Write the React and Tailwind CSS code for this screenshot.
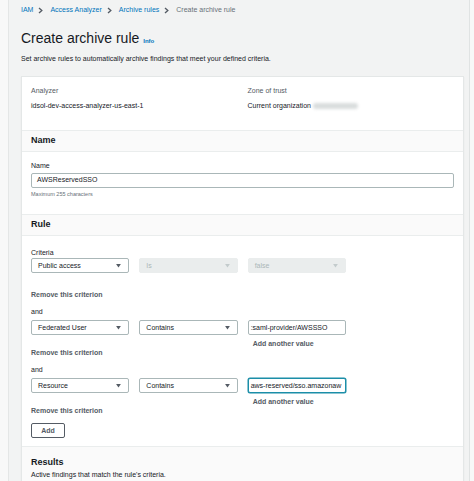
import React from 'react';

const FONT = { fontFamily: '"Liberation Sans", Arial, sans-serif' };

const Chevron = () => (
  <svg viewBox="0 0 6 8" className="w-[5px] h-[7px] ml-[5px] mr-[7px] shrink-0">
    <path d="M1.2 1 L4.6 4 L1.2 7" fill="none" stroke="#545b64" strokeWidth="1.6" />
  </svg>
);

const Caret = ({ light }) => (
  <svg viewBox="0 0 6 5" className="w-[5px] h-[4px] shrink-0">
    <path d="M0 0 H6 L3 4.5 Z" fill={light ? '#c3cbcc' : '#545b64'} />
  </svg>
);

const Select = ({ value, disabled }) => (
  <div
    className={`h-[15px] flex items-center justify-between pl-[6px] pr-[7px] rounded-[2px] border text-[7px] ${
      disabled ? 'bg-[#eaeded] border-[#eaeded] text-[#aab7b8]' : 'bg-white border-[#aab7b8] text-[#16191f]'
    }`}
  >
    <span className="leading-none">{value}</span>
    <Caret light={disabled} />
  </div>
);

const TextBox = ({ value, focused }) => (
  <div
    className={`h-[15px] flex items-center pl-[2px] rounded-[2px] overflow-hidden whitespace-nowrap bg-white text-[7px] text-[#16191f] ${
      focused ? 'border border-[#1b8ea8] shadow-[0_0_0_0.5px_#1b8ea8]' : 'border border-[#aab7b8]'
    }`}
  >
    <span className="leading-none">{value}</span>
  </div>
);

const LinkText = ({ children, className = '' }) => (
  <div className={`text-[7px] leading-[10px] font-bold text-[#545b64] ${className}`}>{children}</div>
);

const criteria = [
  { field: 'Public access', op: 'Is', value: 'false', disabled: true },
  { field: 'Federated User', op: 'Contains', value: ':saml-provider/AWSSSO' },
  { field: 'Resource', op: 'Contains', value: 'aws-reserved/sso.amazonaw', focused: true },
];

const App = () => {
  return (
    <div className="flex h-[481px] overflow-hidden bg-[#f2f3f3]" style={FONT}>
      <div className="w-[9px] shrink-0 bg-[#f8f8f8] border-r border-[#e4e6e6]" />

      <main className="flex-1 min-w-0 pl-[12px] pr-[5px]">
        {/* Breadcrumbs */}
        <nav className="mt-[5px] h-[10px] flex items-center text-[7px] leading-[10px]">
          <span className="text-[#0073bb]">IAM</span>
          <Chevron />
          <span className="text-[#0073bb]">Access Analyzer</span>
          <Chevron />
          <span className="text-[#0073bb]">Archive rules</span>
          <Chevron />
          <span className="text-[#687078]">Create archive rule</span>
        </nav>

        <div className="mt-[14px] flex items-baseline">
          <h1 className="text-[14px] leading-[18px] text-[#16191f]">Create archive rule</h1>
          <span className="ml-[4px] text-[6px] font-bold text-[#0073bb]">Info</span>
        </div>
        <p className="mt-[7px] text-[7px] leading-[10px] text-[#16191f]">
          Set archive rules to automatically archive findings that meet your defined criteria.
        </p>

        <div className="mt-[12px] bg-white border border-[#e4e7e7] shadow-[0_1px_1px_rgba(0,28,36,0.08)]">
          {/* Analyzer details */}
          <div className="grid grid-cols-2 gap-x-[10px] px-[9px] pt-[9px] pb-[19px] text-[7px] leading-[10px] text-[#16191f]">
            <div>
              <div className="text-[#545b64]">Analyzer</div>
              <div className="mt-[5px]">idsol-dev-access-analyzer-us-east-1</div>
            </div>
            <div>
              <div className="text-[#545b64]">Zone of trust</div>
              <div className="mt-[5px] flex items-center">
                <span>Current organization</span>
                <span className="ml-[2px] inline-block w-[45px] h-[6px] rounded-full bg-[#d9dddd] blur-[1.5px]" />
              </div>
            </div>
          </div>

          {/* Name */}
          <div className="h-[22px] flex items-center px-[9px] bg-[#fafafa] border-t border-b border-[#eaeded]">
            <h2 className="text-[9px] font-bold text-[#16191f]">Name</h2>
          </div>
          <div className="px-[9px] pt-[9px] pb-[16px]">
            <div className="text-[7px] leading-[10px] text-[#16191f]">Name</div>
            <div className="mt-[2px]">
              <div className="h-[15px] flex items-center pl-[5px] rounded-[2px] border border-[#aab7b8] text-[7px] text-[#16191f]">
                AWSReservedSSO
              </div>
            </div>
            <div className="mt-[2px] text-[5.5px] leading-[8px] text-[#687078]">Maximum 255 characters</div>
          </div>

          {/* Rule */}
          <div className="h-[22px] flex items-center px-[9px] bg-[#fafafa] border-t border-b border-[#eaeded]">
            <h2 className="text-[9px] font-bold text-[#16191f]">Rule</h2>
          </div>
          <div className="px-[9px] pt-[12px] pb-[6px]">
            <div className="text-[7px] leading-[10px] text-[#16191f]">Criteria</div>
            {criteria.map((c, i) => (
              <div key={c.field}>
                {i > 0 && <div className="mt-[7px] text-[7px] leading-[10px] text-[#16191f]">and</div>}
                <div className={`grid grid-cols-3 gap-x-[10px] w-[315px] items-start ${i === 0 ? 'mt-0' : 'mt-[3px]'}`}>
                  <Select value={c.field} />
                  <Select value={c.op} disabled={c.disabled} />
                  {c.disabled ? <Select value={c.value} disabled /> : <TextBox value={c.value} focused={c.focused} />}
                  <LinkText className={i === 0 ? 'mt-[17px]' : 'mt-[13px]'}>Remove this criterion</LinkText>
                  <div />
                  {i > 0 ? <LinkText className="mt-[4px] ml-[5px]">Add another value</LinkText> : <div />}
                </div>
              </div>
            ))}
            <button className="mt-[7px] w-[34px] h-[15px] border border-[#545b64] rounded-[2px] bg-white text-[7px] font-bold text-[#545b64] leading-none">
              Add
            </button>
          </div>

          {/* Results */}
          <div className="px-[9px] pt-[9px] pb-[8px] bg-[#fafafa] border-t border-[#eaeded]">
            <h2 className="text-[9px] leading-[12px] font-bold text-[#16191f]">Results</h2>
            <p className="mt-[2px] text-[7px] leading-[10px] text-[#16191f]">Active findings that match the rule's criteria.</p>
          </div>
        </div>
      </main>

      <div className="w-[5px] shrink-0 bg-[#f7f8f8] border-l border-[#e0e3e3]" />
    </div>
  );
};

export default App;
